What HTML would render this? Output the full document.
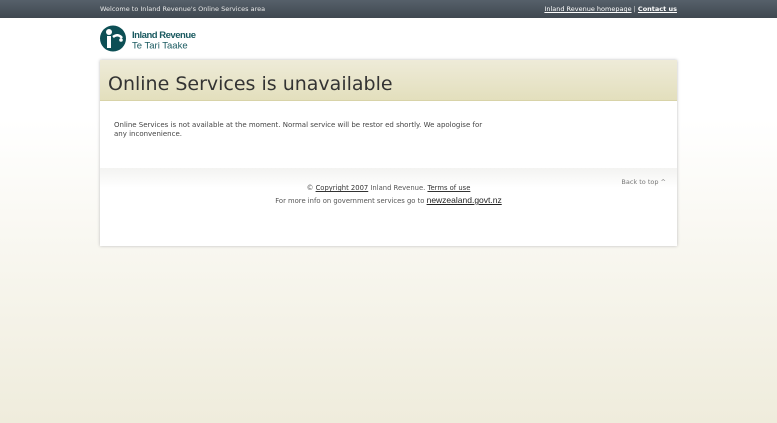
<!DOCTYPE html>
<html><head><style>
*{margin:0;padding:0;box-sizing:border-box}
body{width:777px;height:423px;overflow:hidden;font-family:"DejaVu Sans",Verdana,sans-serif;background:linear-gradient(#fff 0px,#fff 120px,#efecdc 423px);position:relative;color:#333}
.top{height:18px;background:linear-gradient(#56606a,#3f4850);color:#e8e8e8;font-size:6.5px;line-height:18px}
.top .l{position:absolute;left:100px;top:0}
.top .r{position:absolute;right:100px;top:0;color:#ddd}
.top a{color:#fff;text-decoration:underline}
.logo{position:absolute;left:100px;top:25px}
.panel{position:absolute;left:100px;top:60px;width:577px;height:186px;background:#fff;box-shadow:0 0 3px #bbb}
.head{height:41px;background:linear-gradient(#eeebd8,#e3dfbd);border-bottom:1px solid #d8d3a8}
.head h1{font-weight:normal;font-size:19px;color:#333;position:absolute;left:8px;top:13px}
.msg{position:absolute;left:14px;top:61px;font-size:7px;line-height:9px;width:380px;color:#444}
.foot{position:absolute;left:0;top:108px;width:577px;height:78px;background:linear-gradient(#f3f3f1,#fff 20px)}
.foot p{font-size:6.8px;color:#555;text-align:center;position:absolute;width:577px;left:0}
.foot a{color:#333;text-decoration:underline}
.btt{position:absolute;right:11px;top:10px;font-size:6.5px;color:#777}
</style></head><body>
<div class="top"><span class="l">Welcome to Inland Revenue's Online Services area</span><span class="r"><a>Inland Revenue homepage</a> | <a style="font-weight:bold">Contact us</a></span></div>
<div class="logo">
<svg width="110" height="30" viewBox="0 0 110 30">
<circle cx="13" cy="13.5" r="13" fill="#0d4f55"/>
<circle cx="9" cy="7" r="3" fill="#fff"/>
<rect x="7" y="11" width="4" height="12" fill="#fff"/>
<path d="M13 12 q5 -4 9 1" stroke="#fff" stroke-width="2.5" fill="none"/>
<circle cx="21" cy="15" r="1.8" fill="#fff"/>
<text x="32" y="13" font-family="Liberation Sans" font-weight="bold" font-size="9.5" fill="#1a5a60" textLength="64">Inland Revenue</text>
<text x="32" y="23.5" font-family="Liberation Sans" font-size="9.5" fill="#1a5a60">Te Tari Taake</text>
</svg></div>
<div class="panel">
<div class="head"><h1>Online Services is unavailable</h1></div>
<div class="msg">Online Services is not available at the moment. Normal service will be restor ed shortly. We apologise for any inconvenience.</div>
<div class="foot">
<div class="btt">Back to top ^</div>
<p style="top:16px">© <a>Copyright 2007</a> Inland Revenue. <a>Terms of use</a></p>
<p style="top:27px">For more info on government services go to <span style="font-family:'Liberation Sans';font-size:8.5px;color:#222;text-decoration:underline">newzealand.govt.nz</span></p>
</div>
</div>
</body></html>
